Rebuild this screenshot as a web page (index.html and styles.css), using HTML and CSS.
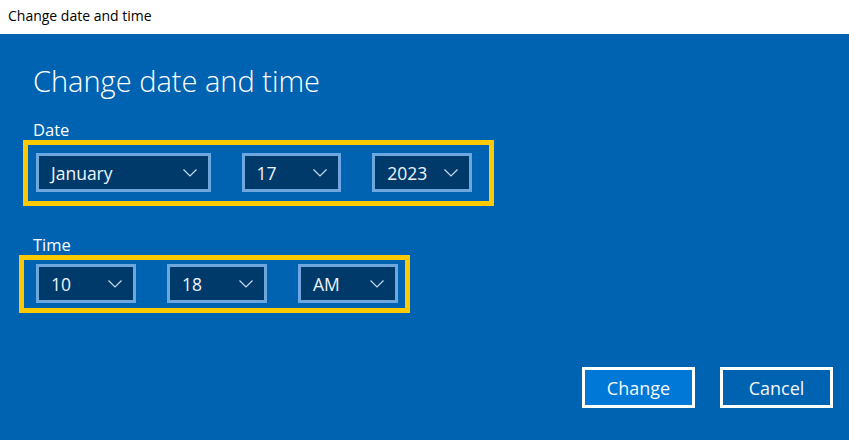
FILE: index.html
```html
<!DOCTYPE html>
<html lang="en">
<head>
  <meta charset="UTF-8" />
  <title>Change date and time</title>
  <link rel="stylesheet" href="styles.css">
</head>
<body>
  <div class="titlebar">Change date and time</div>

  <div class="panel">
    <h1>Change date and time</h1>

    <div class="field-label">Date</div>
    <div class="group date-group">
      <div class="picker wide"><span>January</span><svg class="chev" viewBox="0 0 14 8"><polyline points="0.5,0.5 7,7 13.5,0.5" /></svg></div>
      <div class="picker"><span>17</span><svg class="chev" viewBox="0 0 14 8"><polyline points="0.5,0.5 7,7 13.5,0.5" /></svg></div>
      <div class="picker"><span>2023</span><svg class="chev" viewBox="0 0 14 8"><polyline points="0.5,0.5 7,7 13.5,0.5" /></svg></div>
    </div>

    <div class="field-label time-label">Time</div>
    <div class="group time-group">
      <div class="picker"><span>10</span><svg class="chev" viewBox="0 0 14 8"><polyline points="0.5,0.5 7,7 13.5,0.5" /></svg></div>
      <div class="picker"><span>18</span><svg class="chev" viewBox="0 0 14 8"><polyline points="0.5,0.5 7,7 13.5,0.5" /></svg></div>
      <div class="picker"><span>AM</span><svg class="chev" viewBox="0 0 14 8"><polyline points="0.5,0.5 7,7 13.5,0.5" /></svg></div>
    </div>

    <div class="actions">
      <button class="primary">Change</button>
      <button>Cancel</button>
    </div>
  </div>
</body>
</html>
```

FILE: styles.css
```css
html, body {
  margin: 0;
  height: 100%;
}

body {
  font-family: "Open Sans", "Noto Sans", sans-serif;
  background-color: #0063b1;
  display: flex;
  flex-direction: column;
}

.titlebar {
  height: 34px;
  line-height: 32px;
  padding-left: 8px;
  background: #fff;
  color: #000;
  font-size: 14px;
  flex: none;
}

.panel {
  flex: 1;
  padding: 0 16px 0 19px;
  color: #fff;
}

h1 {
  margin: 28px 0 0 14px;
  font-size: 29px;
  font-weight: 300;
  line-height: 38px;
}

.field-label {
  margin: 20px 0 0 14px;
  font-size: 16.5px;
  line-height: 20px;
}

.time-label {
  margin-top: 29px;
}

.group {
  display: flex;
  gap: 31px;
  border: 5px solid #ffc900;
}

/* date row: 175 + 100 + 100 wide pickers */
.date-group {
  margin-left: 4px;
  padding: 8px 17px 9px 8px;
  width: 436px;
}

.time-group {
  width: 362px;
  padding: 4px 7px 5px 12px;
}

.picker {
  box-sizing: border-box;
  width: 100px;
  height: 39px;
  border: 3px solid #6ea7dd;
  background: #003a6b;
  display: flex;
  align-items: center;
  justify-content: space-between;
  padding: 0 11px 0 12px;
  font-size: 17.5px;
  color: #eef4fb;
}

.picker.wide {
  width: 175px;
}

.chev {
  width: 14px;
  height: 8px;
  fill: none;
  stroke: #c7dbf0;
  stroke-width: 1.2;
}

.actions {
  display: flex;
  justify-content: flex-end;
  gap: 25px;
  margin-top: 54px;
}

button {
  box-sizing: border-box;
  width: 113px;
  height: 41px;
  border: 3px solid #fff;
  background: #0063b1;
  color: #f4f8fc;
  font-family: inherit;
  font-size: 18px;
  padding: 0;
}

button.primary {
  background: #0078d7;
}
```
